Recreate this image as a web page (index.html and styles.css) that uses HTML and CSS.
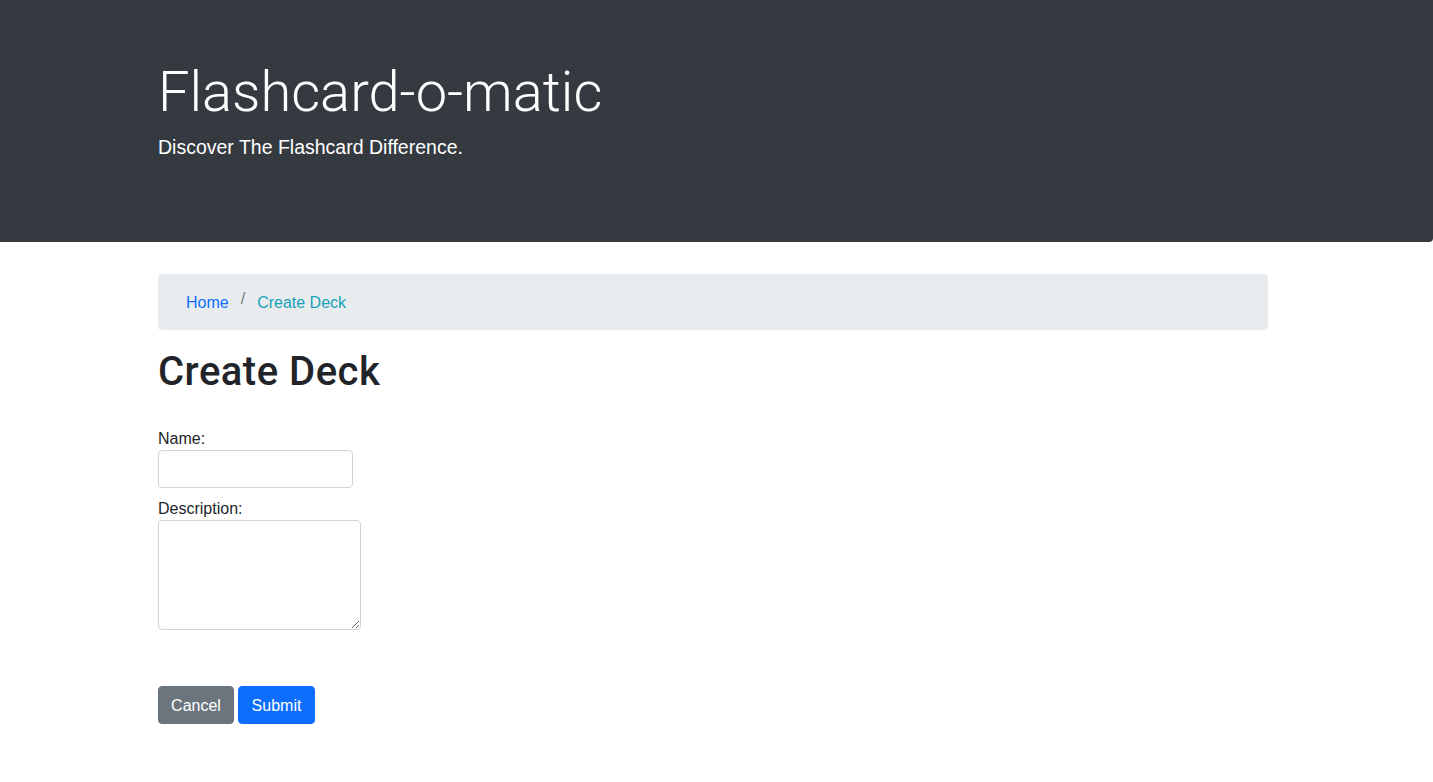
FILE: index.html
```html
<!DOCTYPE html>
<html lang="en">
<head>
<meta charset="utf-8">
<title>Flashcard-o-matic</title>
<link rel="stylesheet" href="styles.css">
</head>
<body>
<header class="jumbotron">
  <div class="container">
    <h1 class="display">Flashcard-o-matic</h1>
    <p class="lead">Discover The Flashcard Difference.</p>
  </div>
</header>
<main class="container">
  <nav class="breadcrumb">
    <a class="crumb home" href="#">Home</a>
    <span class="sep">/</span>
    <span class="crumb active">Create Deck</span>
  </nav>
  <h1 class="page-title">Create Deck</h1>
  <form class="deck-form">
    <label class="field-label" for="name">Name:</label>
    <input class="field name-input" id="name" type="text">
    <label class="field-label desc-label" for="description">Description:</label>
    <textarea class="field desc-input" id="description"></textarea>
    <div class="actions">
      <button type="button" class="btn btn-secondary">Cancel</button>
      <button type="submit" class="btn btn-primary">Submit</button>
    </div>
  </form>
</main>
</body>
</html>
```
FILE: styles.css
```css
* { box-sizing: border-box; }
html, body { margin: 0; padding: 0; }
body {
  font-family: "Liberation Sans", Arial, sans-serif;
  font-size: 16px;
  line-height: 1.5;
  color: #212529;
  background: #fff;
}
.container {
  width: 1110px;
  margin-left: 158px;
}
.jumbotron {
  background: #343a40;
  color: #fff;
  height: 242px;
  padding-top: 59px;
  margin-bottom: 32px;
  border-bottom-right-radius: 4px;
}
.display {
  margin: 0 0 9px 0;
  font-family: Roboto, "Liberation Sans", sans-serif;
  font-weight: 300;
  font-size: 56px;
  line-height: 67px;
  letter-spacing: 0;
}
.lead {
  margin: 0;
  font-size: 19.5px;
  line-height: 24px;
}
.breadcrumb {
  display: flex;
  align-items: center;
  background: #e9ecef;
  border-radius: 4px;
  height: 56px;
  padding: 2px 28px 0 28px;
  margin-bottom: 16px;
}
.crumb { text-decoration: none; }
.home { color: #0d6efd; }
.active { color: #17a2b8; }
.sep {
  color: #6c757d;
  margin: 0 12px;
  position: relative;
  top: -4px;
}
.page-title {
  margin: 0 0 8px 0;
  padding-top: 2px;
  font-family: Roboto, "Liberation Sans", sans-serif;
  font-weight: 500;
  font-size: 40px;
  line-height: 48px;
  letter-spacing: 0.5px;
}
.deck-form {
  display: flex;
  flex-direction: column;
  align-items: flex-start;
  padding-top: 22px;
}
.field-label {
  display: block;
  line-height: 23px;
  padding-top: 1px;
}
.desc-label { margin-top: 8px; }
.field {
  border: 1px solid #ced4da;
  border-radius: 4px;
  background: #fff;
  font: inherit;
  margin: 0;
}
.name-input { width: 195px; height: 38px; }
.desc-input { width: 203px; height: 110px; resize: both; }
.actions {
  display: flex;
  gap: 4px;
  margin-top: 56px;
}
.btn {
  font-family: "Liberation Sans", Arial, sans-serif;
  font-size: 16px;
  line-height: 24px;
  padding: 7px 12px 5px 12px;
  border: 1px solid transparent;
  border-radius: 4px;
  color: #fff;
  height: 38px;
}
.btn-secondary { background: #6c757d; border-color: #6c757d; width: 76px; }
.btn-primary { background: #0d6efd; border-color: #0d6efd; width: 77px; }
```
